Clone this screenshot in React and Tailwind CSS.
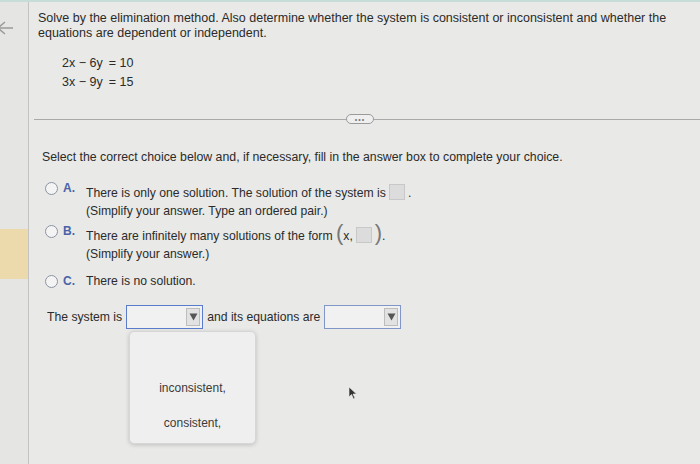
import React from 'react';

const font = { fontFamily: '"Liberation Sans", Arial, sans-serif' };

function Radio({ letter, children }) {
  return (
    <div className="flex items-start">
      <span className="mt-[1px] h-[13px] w-[13px] shrink-0 rounded-full border-[1.5px] border-[#8d93a3] bg-[#f4f4f4]" />
      <span className="ml-[5px] w-[23px] shrink-0 text-[12px] font-bold leading-[14px] text-[#4a63a8]">{letter}.</span>
      <div className="text-[12.2px] leading-[18px] text-[#2b2b2b]">{children}</div>
    </div>
  );
}

function AnswerBox() {
  return <span className="mx-[3px] inline-block h-[16px] w-[16px] translate-y-[3px] border border-[#c8c8c8] bg-[#dcdcdc]" />;
}

function Select({ active }) {
  return (
    <span
      className={`relative inline-flex h-[24px] w-[77px] items-center justify-end border-[1.5px] bg-[#f1f1f1] pr-[2px] ${
        active ? 'border-[#5a7ccc]' : 'border-[#8196c8]'
      }`}
    >
      <span className="flex h-[18px] w-[14px] items-center justify-center border border-[#bdbdbd] bg-[#e2e2e2]">
        <svg width="9" height="8" viewBox="0 0 9 8">
          <path d="M0.5 0.5 H8.5 L4.5 7.5 Z" fill="#555" />
        </svg>
      </span>
    </span>
  );
}

export default function App() {
  return (
    <div className="h-[464px] w-[700px] overflow-hidden border-t-2 border-[#c9ddd8] bg-[#e9e9e7]" style={font}>
      <div className="flex h-full">
        {/* left rail */}
        <div className="relative w-[29px] shrink-0 border-r border-[#c3c3c1] bg-[#e5e5e3]">
          <svg className="absolute left-[-4px] top-[18px]" width="18" height="16" viewBox="0 0 18 16">
            <path d="M9 2 L2 8 L9 14 M2 8 H17" stroke="#9a9a9a" strokeWidth="1.4" fill="none" />
          </svg>
          <div className="absolute left-0 top-[227px] h-[50px] w-[28px] bg-[#ecd9ac]" />
        </div>

        {/* main */}
        <div className="relative flex-1 text-[#2b2b2b]">
          <div className="pl-[9px] pt-[9px] text-[12.5px] leading-[15px]">
            <p>Solve by the elimination method. Also determine whether the system is consistent or inconsistent and whether the</p>
            <p>equations are dependent or independent.</p>
          </div>

          <div className="mt-[13px] pl-[33px] text-[12.5px] leading-[19px]">
            <p>
              <span>2x − 6y</span>
              <span className="ml-[6px]">= 10</span>
            </p>
            <p>
              <span>3x − 9y</span>
              <span className="ml-[6px]">= 15</span>
            </p>
          </div>

          {/* divider */}
          <div className="relative mt-[27px] ml-[5px] h-[1px] bg-[#a9a9a9]">
            <span className="absolute left-[312px] top-[-5px] flex h-[10px] w-[28px] items-center justify-center rounded-full border border-[#9a9a9a] bg-[#efefef]">
              <span className="text-[7px] leading-[7px] tracking-[1px] text-[#777]">•••</span>
            </span>
          </div>

          <p className="mt-[29px] pl-[13px] text-[12.3px] leading-[16px]">
            Select the correct choice below and, if necessary, fill in the answer box to complete your choice.
          </p>

          <div className="mt-[16px] flex flex-col gap-[4px] pl-[16px]">
            <Radio letter="A">
              <p>
                There is only one solution. The solution of the system is
                <AnswerBox />.
              </p>
              <p>(Simplify your answer. Type an ordered pair.)</p>
            </Radio>
            <Radio letter="B">
              <p>
                There are infinitely many solutions of the form{' '}
                <span className="text-[22px] font-light leading-[10px] text-[#777]">(</span>
                x,
                <AnswerBox />
                <span className="text-[22px] font-light leading-[10px] text-[#777]">)</span>.
              </p>
              <p>(Simplify your answer.)</p>
            </Radio>
            <div className="mt-[7px]">
              <Radio letter="C">
                <p className="-mt-[2px]">There is no solution.</p>
              </Radio>
            </div>
          </div>

          <div className="mt-[15px] flex items-center pl-[18px] text-[12.2px]">
            <span className="mr-[4px]">The system is</span>
            <Select active />
            <span className="mx-[4px]">and its equations are</span>
            <Select />
          </div>

          {/* open dropdown */}
          <div className="absolute left-[100px] top-[329px] flex h-[113px] w-[127px] flex-col items-center rounded-[5px] border border-[#d6d6d6] bg-[#efefef] shadow-[0_1px_4px_rgba(0,0,0,0.18)] text-[12px] text-[#3a3a3a]">
            <span className="mt-[47px]">inconsistent,</span>
            <span className="mt-[17px]">consistent,</span>
          </div>

          {/* cursor */}
          <svg className="absolute left-[319px] top-[384px]" width="10" height="14" viewBox="0 0 10 14">
            <path d="M1 1 L1 11 L3.5 8.5 L5.5 13 L7 12.3 L5 8 L8.5 8 Z" fill="#333" stroke="#f0f0f0" strokeWidth="0.6" />
          </svg>
        </div>
      </div>
    </div>
  );
}
